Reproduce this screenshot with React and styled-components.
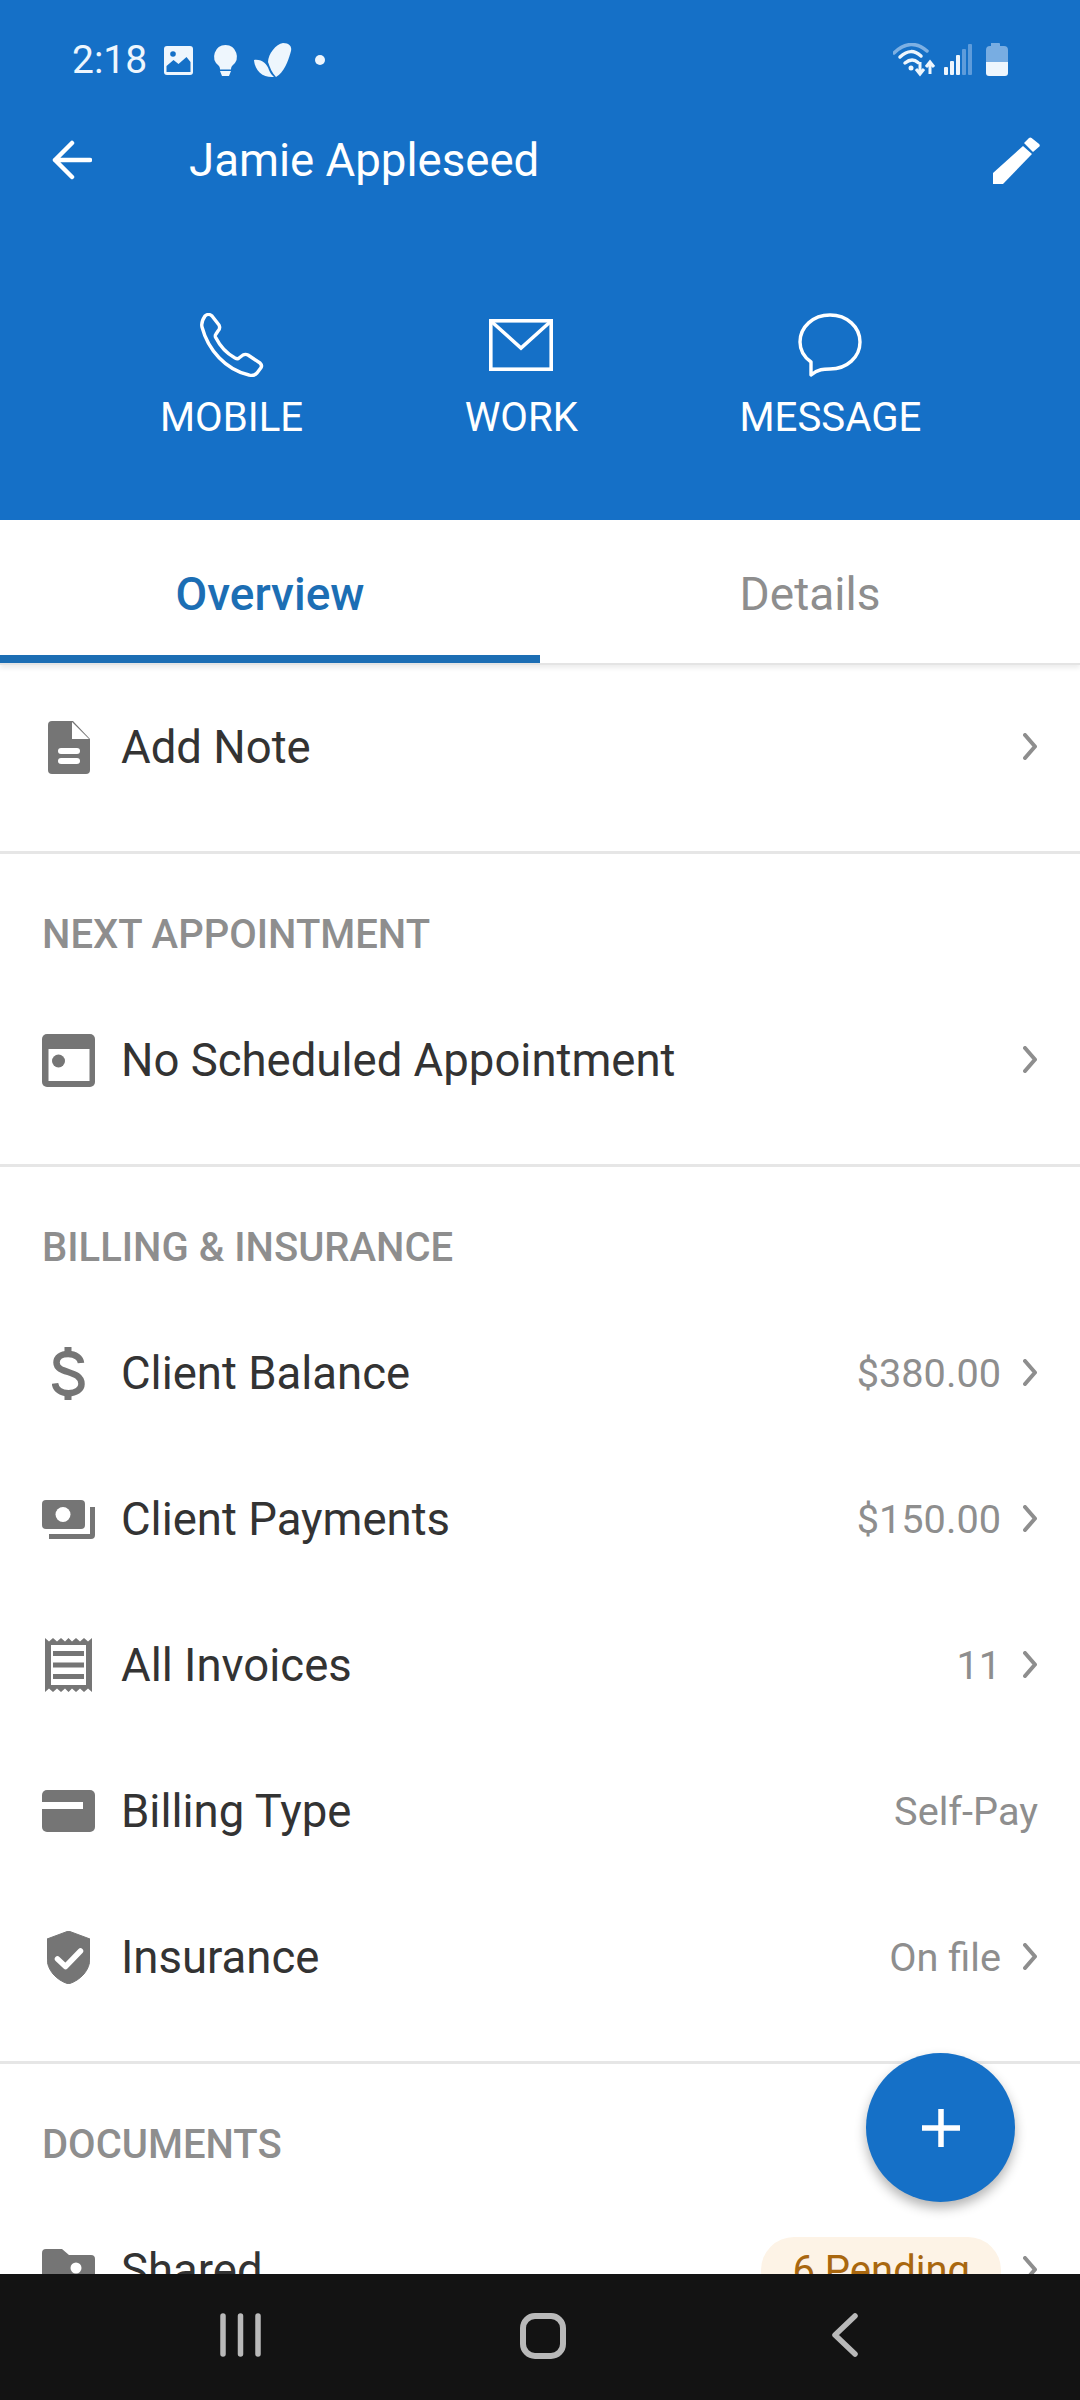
import React from 'react';
import styled, { createGlobalStyle } from 'styled-components';

const BLUE = '#1570c7';
const ICON = '#757575';

const Global = createGlobalStyle`
  html, body { margin: 0; padding: 0; background: #fff; }
  body { font-family: Roboto, "Liberation Sans", sans-serif; }
`;

const Screen = styled.div`
  position: relative;
  width: 1080px;
  height: 2400px;
  display: flex;
  flex-direction: column;
  overflow: hidden;
  background: #fff;
`;

const Header = styled.header`
  height: 520px;
  flex: none;
  background: ${BLUE};
  color: #fff;
  position: relative;
  z-index: 2;
`;

const StatusBar = styled.div`
  height: 120px;
  padding: 0 72px;
  display: flex;
  align-items: center;
  justify-content: space-between;
  box-sizing: border-box;
`;

const StatusGroup = styled.div`
  display: flex;
  align-items: center;
`;

const Clock = styled.span`
  width: 92px;
  font-size: 39px;
  color: #eef6fd;
`;

const Toolbar = styled.div`
  height: 80px;
  padding: 0 40px 0 52px;
  display: flex;
  align-items: center;
`;

const Title = styled.h1`
  flex: 1;
  margin: 0 0 0 97px;
  font-size: 45.6px;
  font-weight: 400;
`;

const Actions = styled.div`
  display: flex;
  gap: 161.5px;
  padding: 113px 0 0 160px;
`;

const Action = styled.div`
  display: flex;
  flex-direction: column;
  align-items: center;
`;

const ActionIcon = styled.div`
  height: 64px;
  display: flex;
  align-items: center;
`;

const ActionLabel = styled.span`
  margin-top: 17px;
  font-size: 40.2px;
  line-height: 48px;
`;

const Tabs = styled.nav`
  height: 145px;
  flex: none;
  display: flex;
  box-sizing: border-box;
  border-bottom: 2px solid #e4e4e4;
  box-shadow: 0 3px 5px rgba(0, 0, 0, 0.08);
`;

const Tab = styled.div`
  width: 540px;
  box-sizing: border-box;
  padding-top: 47px;
  text-align: center;
  font-size: 46px;
  line-height: 54px;
  font-weight: ${p => (p.$active ? 500 : 400)};
  color: ${p => (p.$active ? '#1c6eb4' : '#8e8e8e')};
  border-bottom: 8px solid ${p => (p.$active ? '#1c6eb4' : 'transparent')};
`;

const Content = styled.main`
  flex: 1;
  min-height: 0;
  overflow: hidden;
  padding-top: 9px;
`;

const Section = styled.section`
  padding-bottom: 31px;
  border-bottom: 3px solid #e6e6e6;
  &:last-child { border-bottom: 0; }
`;

const SectionTitle = styled.h2`
  margin: 0;
  padding: 53px 42px 24px;
  font-size: 40px;
  line-height: 56px;
  font-weight: 500;
  color: #8e8e8e;
`;

const Row = styled.div`
  height: 146px;
  padding: 0 42px;
  display: flex;
  align-items: center;
`;

const RowIcon = styled.div`
  width: 53px;
  margin-right: 26px;
  flex: none;
  display: flex;
  justify-content: center;
`;

const RowLabel = styled.span`
  flex: 1;
  font-size: 45.5px;
  color: #333;
`;

const RowValue = styled.span`
  font-size: 39.7px;
  line-height: 48px;
  padding-top: 1px;
  color: #8e8e8e;
`;

const Pill = styled.span`
  height: 66px;
  padding: 0 31px;
  display: flex;
  align-items: center;
  border-radius: 33px;
  background: #fdf3e6;
  font-size: 40px;
  color: #a9670f;
`;

const Chevron = styled.svg`
  flex: none;
  margin: 0 1px 1px 22px;
`;

const Fab = styled.button`
  position: absolute;
  left: 866px;
  top: 2053px;
  width: 149px;
  height: 149px;
  padding: 0;
  border: 0;
  border-radius: 50%;
  background: ${BLUE};
  box-shadow: 0 6px 12px rgba(0, 0, 0, 0.3);
  display: flex;
  align-items: center;
  justify-content: center;
  z-index: 3;
`;

const NavBar = styled.footer`
  height: 126px;
  flex: none;
  background: #131313;
  display: flex;
  align-items: flex-start;
  padding-top: 39px;
  box-sizing: border-box;
  position: relative;
  z-index: 4;
`;

const NavSlot = styled.div`
  position: absolute;
  left: ${p => p.$x}px;
`;

const RowChevron = () => (
  <Chevron width="14" height="27" viewBox="0 0 14 27">
    <path d="M2 2l10 11.500L2 25" fill="none" stroke="#8e8e8e" strokeWidth="4" strokeLinecap="round" strokeLinejoin="round" />
  </Chevron>
);

const NoteIcon = () => (
  <svg width="42" height="53" viewBox="0 0 42 53">
    <path d="M4 0h21l17 18v31a4 4 0 0 1-4 4H4a4 4 0 0 1-4-4V4a4 4 0 0 1 4-4z" fill={ICON} />
    <path d="M24 1v17h17z" fill="#fff" />
    <rect x="10" y="27" width="22" height="6" rx="3" fill="#fff" />
    <rect x="10" y="37" width="22" height="6" rx="3" fill="#fff" />
  </svg>
);

const CalendarIcon = () => (
  <svg width="53" height="53" viewBox="0 0 53 53">
    <rect width="53" height="53" rx="5" fill={ICON} />
    <rect x="6.500" y="15" width="41" height="32" fill="#fff" />
    <circle cx="16.500" cy="27" r="6.500" fill={ICON} />
  </svg>
);

const DollarIcon = () => (
  <svg width="33" height="53" viewBox="0 0 33 53">
    <path d="M12.500 0h7v7h-7zM12.500 46h7v7h-7z" fill={ICON} />
    <path d="M29 16c-.5-5-5.500-9-12.800-9C9 7 4.500 10.500 4.500 15.500c0 12 25 7 25 21.500 0 5.500-5.500 9.200-13 9.200-7.800 0-12.800-4-13.500-9.700" fill="none" stroke={ICON} strokeWidth="6.500" />
  </svg>
);

const MoneyIcon = () => (
  <svg width="53" height="39" viewBox="0 0 53 39">
    <path d="M4 0h35a4 4 0 0 1 4 4v21a4 4 0 0 1-4 4H4a4 4 0 0 1-4-4V4a4 4 0 0 1 4-4z" fill={ICON} />
    <circle cx="21" cy="14.500" r="7.500" fill="#fff" />
    <path d="M48 7h5v28a4 4 0 0 1-4 4H7v-5h41z" fill={ICON} />
  </svg>
);

const InvoiceIcon = () => (
  <svg width="47" height="54" viewBox="0 0 47 54">
    <path d="M0 0l4 3.500L8 0l4 3.500L16 0l4 3.500L23.500 0 27 3.500 31 0l4 3.500L39 0l4 3.500L47 0v54l-4-3.500-4 3.500-4-3.500-4 3.500-4-3.500-3.500 3.500-3.500-3.500-4 3.500-4-3.500-4 3.500-4-3.500L0 54z" fill={ICON} />
    <rect x="6" y="7" width="35" height="40" fill="#fff" />
    <rect x="8" y="13" width="31" height="5" fill={ICON} />
    <rect x="8" y="24.500" width="31" height="5" fill={ICON} />
    <rect x="8" y="36" width="31" height="5" fill={ICON} />
  </svg>
);

const CardIcon = () => (
  <svg width="53" height="42" viewBox="0 0 53 42">
    <rect width="53" height="42" rx="5" fill={ICON} />
    <rect y="12" width="41" height="7" fill="#fff" />
  </svg>
);

const ShieldIcon = () => (
  <svg width="43" height="53" viewBox="0 0 43 53">
    <path d="M21.500 0L43 8v19c0 12-9 22-21.500 26C9 49 0 39 0 27V8z" fill={ICON} stroke={ICON} strokeLinejoin="round" />
    <path d="M10.500 28l8 7.500L33.500 20" fill="none" stroke="#fff" strokeWidth="5.500" strokeLinecap="round" strokeLinejoin="round" />
  </svg>
);

const FolderIcon = () => (
  <svg width="53" height="42" viewBox="0 0 53 42">
    <path d="M4 0h16l7 6h22a4 4 0 0 1 4 4v28a4 4 0 0 1-4 4H4a4 4 0 0 1-4-4V4a4 4 0 0 1 4-4z" fill={ICON} />
    <circle cx="34" cy="19" r="5.500" fill="#fff" />
  </svg>
);

const billing = [
  { icon: <DollarIcon />, label: 'Client Balance', value: '$380.00', more: true },
  { icon: <MoneyIcon />, label: 'Client Payments', value: '$150.00', more: true },
  { icon: <InvoiceIcon />, label: 'All Invoices', value: '11', more: true },
  { icon: <CardIcon />, label: 'Billing Type', value: 'Self-Pay' },
  { icon: <ShieldIcon />, label: 'Insurance', value: 'On file', more: true },
];

const App = () => (
  <Screen>
    <Global />
    <Header>
      <StatusBar>
        <StatusGroup>
          <Clock>2:18</Clock>
          <svg width="170" height="40" viewBox="0 0 170 40">
            <rect x="0" y="6" width="29" height="29" rx="3" fill="#eef6fd" />
            <circle cx="9" cy="14" r="2.800" fill={BLUE} />
            <path d="M2.500 32v-6l7-6 5 4 8-7 4 5v10z" fill={BLUE} />
            <path d="M61.500 5a11.500 11.500 0 0 1 7 20.500c-1 1-1.500 2-1.500 4h-11c0-2-.5-3-1.500-4a11.500 11.500 0 0 1 7-20.500z" fill="#eef6fd" />
            <path d="M56 31h11l-2 5h-7z" fill="#eef6fd" />
            <path d="M119 3c6 0 9 3 8 8-3 11-7 21-15 26-4-4-6-9-8-15 0-8 8-18 15-19z" fill="#eef6fd" />
            <path d="M90 20c8-1 13 4 15 10 1 3 3 5 5 7-10 1-19-5-20-17z" fill="#eef6fd" />
            <circle cx="156" cy="20" r="5" fill="#eef6fd" />
          </svg>
        </StatusGroup>
        <StatusGroup>
          <svg width="115" height="34" viewBox="0 0 115 34">
            <path d="M1 10C12-1 24-1 34 8" fill="none" stroke="#7db0e3" strokeWidth="3.500" strokeLinecap="round" />
            <path d="M7 14c8-7 14-7 21-1M12 20c5-4 9-4 13-.5" fill="none" stroke="#eef6fd" strokeWidth="3.500" strokeLinecap="round" />
            <circle cx="18" cy="25" r="2.500" fill="#eef6fd" />
            <path d="M27 19v11M23 26l4 5 4-5M37 31V20M33 24l4-5 4 5" fill="none" stroke="#eef6fd" strokeWidth="3" />
            <rect x="51" y="24" width="4" height="8" rx="1" fill="#eef6fd" />
            <rect x="57" y="18" width="4" height="14" rx="1" fill="#eef6fd" />
            <rect x="63" y="12" width="4" height="20" rx="1" fill="#eef6fd" />
            <rect x="69" y="6" width="4" height="26" rx="1" fill="#5e9cdb" />
            <rect x="75" y="1" width="4" height="31" rx="1" fill="#5e9cdb" />
            <path d="M98 0h8a1 1 0 0 1 1 1v2h4a4 4 0 0 1 4 4v12H93V7a4 4 0 0 1 4-4h1z" fill="#78ade2" />
            <path d="M93 19h22v11a3 3 0 0 1-3 3H96a3 3 0 0 1-3-3z" fill="#eef6fd" />
          </svg>
        </StatusGroup>
      </StatusBar>
      <Toolbar>
        <svg width="40" height="40" viewBox="0 0 40 40">
          <path d="M38 20H3M20 3L3 20l17 17" fill="none" stroke="#fff" strokeWidth="4.500" strokeLinecap="round" strokeLinejoin="round" />
        </svg>
        <Title>Jamie Appleseed</Title>
        <svg width="47" height="48" viewBox="0 0 47 48">
          <path d="M0 48V37L30 10l9 8-29 30z" fill="#fff" />
          <path d="M36 2a2 2 0 0 1 2.600 0l7.500 6a2 2 0 0 1 0 2.800L40 16l-9-9z" fill="#fff" />
        </svg>
      </Toolbar>
      <Actions>
        <Action>
          <ActionIcon>
            <svg width="64" height="64" viewBox="0 0 64 64">
              <path d="M5 3c2-2 5-2 7 0l7 9c1 2 1 4-1 6l-2 3c-1 1-1 3 0 4 4 8 10 15 19 20 2 1 3 1 4 0l4-3c2-1 3-1 5 0l12 8c2 2 2 4 0 6l-3 4c-2 2-5 3-8 2C26 57 8 37 2 14 1 10 3 6 5 3z" fill="none" stroke="#fff" strokeWidth="3.400" strokeLinejoin="round" />
            </svg>
          </ActionIcon>
          <ActionLabel>MOBILE</ActionLabel>
        </Action>
        <Action>
          <ActionIcon>
            <svg width="64" height="52" viewBox="0 0 64 52">
              <rect x="1.800" y="1.800" width="60.400" height="48.400" fill="none" stroke="#fff" strokeWidth="3.600" />
              <path d="M3 3l29 26L61 3" fill="none" stroke="#fff" strokeWidth="3.600" />
            </svg>
          </ActionIcon>
          <ActionLabel>WORK</ActionLabel>
        </Action>
        <Action>
          <ActionIcon>
            <svg width="64" height="64" viewBox="0 0 64 64">
              <path d="M13 62V49C6 44 2 37 2 29 2 14 15 2 32 2s30 12 30 27-13 27-30 27c-6 0-12 0-19 6z" fill="none" stroke="#fff" strokeWidth="3.400" strokeLinejoin="round" />
            </svg>
          </ActionIcon>
          <ActionLabel>MESSAGE</ActionLabel>
        </Action>
      </Actions>
    </Header>
    <Tabs>
      <Tab $active>Overview</Tab>
      <Tab>Details</Tab>
    </Tabs>
    <Content>
      <Section>
        <Row>
          <RowIcon><NoteIcon /></RowIcon>
          <RowLabel>Add Note</RowLabel>
          <RowChevron />
        </Row>
      </Section>
      <Section>
        <SectionTitle>NEXT APPOINTMENT</SectionTitle>
        <Row>
          <RowIcon><CalendarIcon /></RowIcon>
          <RowLabel>No Scheduled Appointment</RowLabel>
          <RowChevron />
        </Row>
      </Section>
      <Section>
        <SectionTitle>BILLING &amp; INSURANCE</SectionTitle>
        {billing.map(r => (
          <Row key={r.label}>
            <RowIcon>{r.icon}</RowIcon>
            <RowLabel>{r.label}</RowLabel>
            <RowValue>{r.value}</RowValue>
            {r.more && <RowChevron />}
          </Row>
        ))}
      </Section>
      <Section>
        <SectionTitle>DOCUMENTS</SectionTitle>
        <Row>
          <RowIcon><FolderIcon /></RowIcon>
          <RowLabel>Shared</RowLabel>
          <Pill>6 Pending</Pill>
          <RowChevron />
        </Row>
      </Section>
    </Content>
    <Fab aria-label="Add">
      <svg width="38" height="38" viewBox="0 0 38 38">
        <path d="M19 0v38M0 19h38" stroke="#fff" strokeWidth="5.500" />
      </svg>
    </Fab>
    <NavBar>
      <NavSlot $x={220}>
        <svg width="41" height="44" viewBox="0 0 41 44">
          <path d="M3 3v38M20.500 3v38M38 3v38" stroke="#b9b9b9" strokeWidth="5.500" strokeLinecap="round" />
        </svg>
      </NavSlot>
      <NavSlot $x={520}>
        <svg width="46" height="46" viewBox="0 0 46 46">
          <rect x="3" y="3" width="40" height="40" rx="12" fill="none" stroke="#b9b9b9" strokeWidth="6" />
        </svg>
      </NavSlot>
      <NavSlot $x={832}>
        <svg width="26" height="44" viewBox="0 0 26 44">
          <path d="M23 3L3 22l20 19" fill="none" stroke="#b9b9b9" strokeWidth="5.500" strokeLinecap="round" strokeLinejoin="round" />
        </svg>
      </NavSlot>
    </NavBar>
  </Screen>
);

export default App;
